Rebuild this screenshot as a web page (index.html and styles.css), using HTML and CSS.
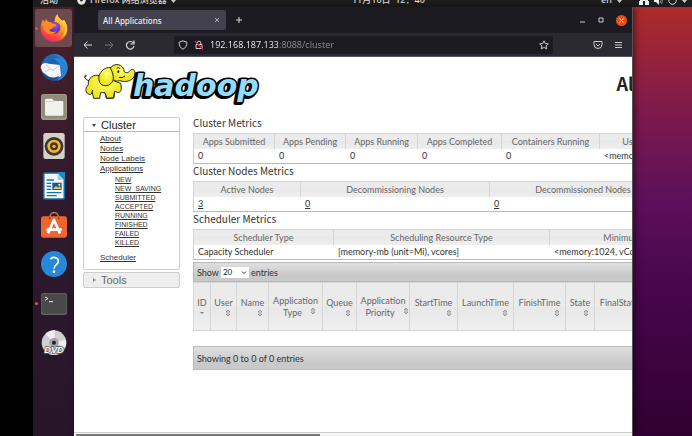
FILE: index.html
```html
<!DOCTYPE html>
<html lang="zh-CN">
  <head>
    <meta charset="utf-8">
    <title>All Applications</title>
    <link rel="stylesheet" href="styles.css">
  </head>
  <body>
    <!-- sort arrows, reused by the table headers -->
    <svg class="defs" width="0" height="0">
      <symbol id="sort" viewBox="0 0 6 8">
        <path d="M1 3L3 1l2 2zM1 5l2 2 2-2z" fill="none" stroke="#888" stroke-width=".8"/>
      </symbol>
      <symbol id="sort-down" viewBox="0 0 6 8">
        <path d="M1 3h4L3 5z" fill="#777"/>
      </symbol>
    </svg>

    <div class="screen">
      <div class="topbar">
        <span class="activities">活动</span>
        <span class="app-menu">
          <svg width="9" height="9" viewBox="0 0 9 9"><circle cx="4.500" cy="4.500" r="4.200" fill="#eee"/><path d="M3 2.500c2-1 4 1 2.500 2.500S2.500 5 3 2.500" fill="#333"/></svg>
          Firefox 网络浏览器
          <svg width="5" height="9" viewBox="0 0 5 9"><path d="M0 4h5L2.500 7z" fill="#ccc"/></svg>
        </span>
        <span class="clock">11月10日&nbsp; 12：40</span>
        <span class="tray">
          <span>en</span>
          <svg width="5" height="9" viewBox="0 0 5 9"><path d="M0 4h5L2.500 7z" fill="#ccc"/></svg>
          <svg class="net" width="10" height="9" viewBox="0 0 10 9"><path d="M3 0h4v3H3zM0 5h4v4H0zM6 5h4v4H6zM1 4h8v1H1z" fill="#eee"/></svg>
          <svg width="9" height="9" viewBox="0 0 9 9"><path d="M0 3h2l3-3v9L2 6H0z" fill="#eee"/><path d="M6 2q2 2.500 0 5M7.500 1q2 3.500 0 7" fill="none" stroke="#aaa" stroke-width=".8"/></svg>
          <svg width="9" height="9" viewBox="0 0 9 9"><path d="M2.500 1.500a3.700 3.700 0 1 0 4 0M4.500 0v4" fill="none" stroke="#ddd"/></svg>
          <svg width="5" height="9" viewBox="0 0 5 9"><path d="M0 4h5L2.500 7z" fill="#ccc"/></svg>
        </span>
      </div>

      <div class="desktop">
        <div class="dock">
          <a class="dock-item active running" href="#" title="Firefox">
            <svg width="28" height="28" viewBox="0 0 84 84">
              <defs>
                <linearGradient id="ff" x1=".8" y1="0" x2=".3" y2="1"><stop offset="0" stop-color="#ffe63d"/><stop offset=".45" stop-color="#ff9a1f"/><stop offset=".75" stop-color="#ff4a3d"/><stop offset="1" stop-color="#f0246e"/></linearGradient>
                <radialGradient id="ffb" cx=".6" cy=".3"><stop offset="0" stop-color="#a34ff5"/><stop offset="1" stop-color="#5a35b8"/></radialGradient>
              </defs>
              <path d="M52 1c2 10 10 15 15 20l4-4c6 9 12 18 11 30-1 22-18 36-40 36S2 66 2 44c0-11 2-21 8-28l3 9 6-10c1 6 4 8 9 9l16-1C44 14 46 6 52 1z" fill="url(#ff)"/>
              <path d="M28 28c8-6 27-6 32 6s-4 26-19 26c-12 0-18-8-18-16z" fill="url(#ffb)"/>
              <path d="M10 24c10-2 20-1 27 4 8 2 12 3 12 6s-7 4-11 7c-2 3-6 7-11 5 2 9 13 10 23 5-6 12-26 13-35 1C10 44 8 34 10 24z" fill="#ff8a1f"/>
              <path d="M52 1c0 15 20 22 19 42 3-8 2-13-1-20 10 18 6 40-12 51C86 62 86 36 72 17l-3 5C61 16 53 10 52 1z" fill="#ffd43a"/>
            </svg>
          </a>
          <a class="dock-item" href="#" title="Thunderbird">
            <svg width="28" height="28" viewBox="0 0 84 84">
              <circle cx="43" cy="43" r="40" fill="#1d62ad"/>
              <path d="M22 12C46-8 84 12 83 46c-1 20-15 34-32 38 16-20 18-42 2-58-10-10-22-13-31-14z" fill="#2a84d6"/>
              <path d="M16 16C32 0 54 4 62 18c-12-6-30-3-40 10L10 34z" fill="#2467b4"/>
              <path d="M2 44c2-13 12-16 24-12l34 4 3 32c-8 7-22 9-34 5L8 57z" fill="#f6f6f8"/>
              <path d="M18 36l20 16 22-15M14 56l16-8" fill="none" stroke="#c3c9d5" stroke-width="3"/>
              <path d="M8 60c10 14 30 18 50 8-10 16-39 20-50-8z" fill="#174b91"/>
            </svg>
          </a>
          <a class="dock-item" href="#" title="Files">
            <svg width="26" height="26" viewBox="0 0 78 78">
              <rect width="78" height="78" rx="8" fill="#a19a88"/>
              <rect x="3" y="3" width="72" height="70" rx="7" fill="#918b7b"/>
              <path d="M12 18q0-4 4-4h17l6 7h24q4 0 4 4v36q0 4-4 4H16q-4 0-4-4z" fill="#f2f1ed"/>
              <path d="M14 23h22l5-3" fill="none" stroke="#d2cec4" stroke-width="3"/>
            </svg>
          </a>
          <a class="dock-item" href="#" title="Rhythmbox">
            <svg width="26" height="26" viewBox="0 0 78 78">
              <rect x="7" width="64" height="78" rx="7" fill="#d5d1c9"/>
              <circle cx="39" cy="40" r="28" fill="#383838"/>
              <circle cx="39" cy="40" r="20" fill="#f6b52c"/>
              <circle cx="39" cy="40" r="12" fill="#3c3933"/>
              <circle cx="39" cy="40" r="5" fill="#f6b52c"/>
            </svg>
          </a>
          <a class="dock-item" href="#" title="LibreOffice Writer">
            <svg width="26" height="28" viewBox="0 0 78 84">
              <path d="M12 3h38l20 20v54q0 4-4 4H12q-4 0-4-4V7q0-4 4-4z" fill="#f4f7fa" stroke="#136a9c" stroke-width="5"/>
              <path d="M50 0h22v24z" fill="#1c8bc7"/><path d="M50 2v22h20z" fill="#9bd0ec"/>
              <path d="M17 24h22M17 34h14M17 43h14M17 52h14M17 62h44M17 71h30" stroke="#1674a8" stroke-width="4"/>
              <path d="M34 32h28v22H34z" fill="#1b5c83"/><path d="M36 51l9-9 6 5 5-4 5 8z" fill="#e5ca64"/><circle cx="55" cy="38" r="3" fill="#fff"/>
            </svg>
          </a>
          <a class="dock-item" href="#" title="Ubuntu Software">
            <svg width="26" height="26" viewBox="0 0 78 78">
              <path d="M26 18c0-22 27-22 27 0" fill="none" stroke="#b98559" stroke-width="4"/>
              <rect y="13" width="78" height="64" rx="7" fill="#ee6530"/>
              <path d="M26 16v6M53 16v6" stroke="#7d351b" stroke-width="4"/>
              <path d="M21 64l18-40 18 40M16 53h46" fill="none" stroke="#fff" stroke-width="8" stroke-linejoin="round"/>
            </svg>
          </a>
          <a class="dock-item" href="#" title="Help">
            <svg width="26" height="26" viewBox="0 0 78 78">
              <circle cx="39" cy="39" r="39" fill="#2688d8"/>
              <path d="M28 25c7-10 25-6 24 6-1 11-13 10-13 22" fill="none" stroke="#fff" stroke-width="5"/>
              <circle cx="39" cy="62" r="4" fill="#fff"/>
            </svg>
          </a>
          <a class="dock-item running" href="#" title="Terminal">
            <svg width="26" height="22" viewBox="0 0 78 66">
              <rect width="78" height="66" rx="8" fill="#666"/>
              <rect x="2" y="2" width="74" height="60" rx="7" fill="#494949"/>
              <path d="M12 12l9 5-9 5M24 26h12" fill="none" stroke="#f0f0f0" stroke-width="3"/>
            </svg>
          </a>
          <a class="dock-item" href="#" title="DVD">
            <svg width="26" height="26" viewBox="0 0 78 78">
              <circle cx="39" cy="38" r="37" fill="#cfcfcf"/>
              <path d="M39 38L14 11q13-11 28-10zM39 38l34 14q4-12 2-23z" fill="#eee"/>
              <circle cx="39" cy="38" r="14" fill="#a7a2a8"/><circle cx="39" cy="38" r="6" fill="#2c1b2d"/>
              <text x="39" y="70" class="dvd-text">DVD</text>
            </svg>
          </a>
        </div>

        <div class="window">
          <div class="tabstrip">
            <div class="tab">
              <span>All Applications</span>
              <button class="icon-btn" aria-label="Close tab"><svg width="6" height="6" viewBox="0 0 6 6"><path d="M1 1l4 4M5 1L1 5" stroke="#ccc" stroke-width=".8"/></svg></button>
            </div>
            <button class="icon-btn new-tab" aria-label="New tab"><svg width="8" height="8" viewBox="0 0 8 8"><path d="M4 1v6M1 4h6" stroke="#ddd"/></svg></button>
            <div class="window-controls">
              <button class="icon-btn" aria-label="Minimize"><svg width="6" height="6" viewBox="0 0 6 6"><path d="M0 5h5" stroke="#ccc"/></svg></button>
              <button class="icon-btn" aria-label="Maximize"><svg width="6" height="6" viewBox="0 0 6 6"><path d="M1 1h4v4H1z" fill="none" stroke="#ccc"/></svg></button>
              <button class="icon-btn close-window" aria-label="Close"><svg width="5" height="5" viewBox="0 0 5 5"><path d="M.5.5l4 4M4.500.5l-4 4" stroke="#fff"/></svg></button>
            </div>
          </div>

          <div class="toolbar">
            <div class="nav-buttons">
              <button class="icon-btn" aria-label="Back"><svg width="10" height="10" viewBox="0 0 10 10"><path d="M9 5H1M4.500 1.500L1 5l3.500 3.500" fill="none" stroke="#ddd"/></svg></button>
              <button class="icon-btn" aria-label="Forward"><svg width="10" height="10" viewBox="0 0 10 10"><path d="M1 5h8M5.500 1.500L9 5 5.500 8.500" fill="none" stroke="#74737c"/></svg></button>
              <button class="icon-btn" aria-label="Reload"><svg width="10" height="10" viewBox="0 0 10 10"><path d="M8.300 3A3.800 3.800 0 1 0 9 6M9 .5v3.500H5.500" fill="none" stroke="#ddd" stroke-width="1.200"/></svg></button>
            </div>
            <div class="urlbar">
              <svg width="10" height="10" viewBox="0 0 10 10"><path d="M5 .8l3.800 1.400C9 6 7.500 8 5 9.200 2.500 8 1 6 1.200 2.200z" fill="none" stroke="#ccc"/></svg>
              <svg class="lock" width="10" height="10" viewBox="0 0 10 10"><path d="M2 4.500h6v4H2zM3.200 4.500V3a1.800 1.800 0 0 1 3.600 0v1.500" fill="none" stroke="#ccc"/><path d="M1 1l8 8.500" stroke="#e22850" stroke-width="1.200"/></svg>
              <input class="address" type="text" value="192.168.187.133:8088/cluster" aria-label="Address">
              <button class="icon-btn" aria-label="Bookmark"><svg width="10" height="10" viewBox="0 0 10 10"><path d="M5 .8l1.300 2.800 3 .3-2.200 2 .6 3L5 7.400 2.300 8.900l.6-3-2.200-2 3-.3z" fill="none" stroke="#ccc"/></svg></button>
            </div>
            <div class="toolbar-end">
              <button class="icon-btn" aria-label="Save to Pocket"><svg width="10" height="10" viewBox="0 0 10 10"><path d="M1 1.500h8v3a4 4 0 0 1-8 0zM3 4l2 2 2-2" fill="none" stroke="#ccc"/></svg></button>
              <button class="icon-btn" aria-label="Menu"><svg width="8" height="8" viewBox="0 0 8 8"><path d="M0 1.500h7M0 4h7M0 6.500h7" stroke="#ccc"/></svg></button>
            </div>
          </div>

          <div class="viewport">
            <div class="page">
              <div class="page-header">
                <svg class="logo" width="178" height="46" viewBox="0 0 534 138">
                  <defs><radialGradient id="hide" cx=".55" cy=".35"><stop offset="0" stop-color="#ffff72"/><stop offset="1" stop-color="#eee420"/></radialGradient></defs>
                  <path d="M18 56C8 54 2 46 8 38M3 46l8-5" fill="none" stroke="#222" stroke-width="3"/>
                  <path d="M52 42C32 34 14 48 16 68 5 80 6 94 22 98l6-6 4 17h18l3-17h13l4 17 22-1 3-20 11 4c9-2 11-12 7-28z" fill="url(#hide)" stroke="#292815" stroke-width="3"/>
                  <path d="M66 94l6 15 20-1 3-20" fill="none" stroke="#292815" stroke-width="3"/>
                  <path d="M80 20C94 0 122 5 124 30c8 5 15 0 19-6 7-5 14 1 13 13-4 18-26 26-46 19-16 6-25-6-30-36z" fill="url(#hide)" stroke="#292815" stroke-width="3"/>
                  <path d="M82 17C66 14 52 28 48 42c-2 14 2 28 18 29 14 1 27-11 25-27-2-12-5-19-9-27z" fill="url(#hide)" stroke="#292815" stroke-width="3"/>
                  <path d="M101 19q5-5 10 1M108 46q9 4 18-4M29 84l-3 12" fill="none" stroke="#292815" stroke-width="3"/>
                  <ellipse cx="106" cy="29" rx="3" ry="4" fill="#222"/>
                  <text x="145" y="105" class="logo-shadow">hadoop</text>
                  <text x="150" y="102" class="logo-text">hadoop</text>
                </svg>
                <h1>All Applications</h1>
              </div>

              <div class="page-body">
                <div class="sidebar">
                  <div class="menu open">
                    <h3><svg width="6" height="6" viewBox="0 0 6 6"><path d="M1 2h4L3 5z" fill="#444"/></svg>Cluster</h3>
                    <div class="menu-content">
                      <ul>
                        <li><a href="#">About</a></li>
                        <li><a href="#">Nodes</a></li>
                        <li><a href="#">Node Labels</a></li>
                        <li><a href="#">Applications</a>
                          <ul class="states">
                            <li><a href="#">NEW</a></li>
                            <li><a href="#">NEW_SAVING</a></li>
                            <li><a href="#">SUBMITTED</a></li>
                            <li><a href="#">ACCEPTED</a></li>
                            <li><a href="#">RUNNING</a></li>
                            <li><a href="#">FINISHED</a></li>
                            <li><a href="#">FAILED</a></li>
                            <li><a href="#">KILLED</a></li>
                          </ul>
                        </li>
                        <li><a href="#">Scheduler</a></li>
                      </ul>
                    </div>
                  </div>
                  <div class="menu">
                    <h3><svg width="6" height="6" viewBox="0 0 6 6"><path d="M2 1l3 2-3 2z" fill="#888"/></svg>Tools</h3>
                  </div>
                </div>

                <div class="content">
                  <h2>Cluster Metrics</h2>
                  <table class="metrics">
                    <colgroup><col class="w82"><col class="w71"><col class="w72"><col class="w84"><col class="w98"><col class="w108"><col></colgroup>
                    <thead><tr><th>Apps Submitted</th><th>Apps Pending</th><th>Apps Running</th><th>Apps Completed</th><th>Containers Running</th><th>Used Resources</th><th></th></tr></thead>
                    <tbody><tr><td>0</td><td>0</td><td>0</td><td>0</td><td>0</td><td>&lt;memory:0 B, vCores:0&gt;</td><td></td></tr></tbody>
                  </table>

                  <h2>Cluster Nodes Metrics</h2>
                  <table class="metrics">
                    <colgroup><col class="w108"><col class="w189"><col class="w187"><col></colgroup>
                    <thead><tr><th>Active Nodes</th><th>Decommissioning Nodes</th><th>Decommissioned Nodes</th><th></th></tr></thead>
                    <tbody><tr><td><a href="#">3</a></td><td><a href="#">0</a></td><td><a href="#">0</a></td><td></td></tr></tbody>
                  </table>

                  <h2>Scheduler Metrics</h2>
                  <table class="metrics">
                    <colgroup><col class="w141"><col class="w216"><col class="w187"><col></colgroup>
                    <thead><tr><th>Scheduler Type</th><th>Scheduling Resource Type</th><th>Minimum Allocation</th><th></th></tr></thead>
                    <tbody><tr><td>Capacity Scheduler</td><td>[memory-mb (unit=Mi), vcores]</td><td>&lt;memory:1024, vCores:1&gt;</td><td></td></tr></tbody>
                  </table>

                  <div class="apps">
                    <div class="apps-bar">
                      <label for="length">Show</label>
                      <span class="select">
                        <select id="length"><option>20</option><option>40</option><option>60</option></select>
                        <svg width="6" height="4" viewBox="0 0 6 4"><path d="M1 .5l2 2 2-2" fill="none" stroke="#333"/></svg>
                      </span>
                      <span>entries</span>
                    </div>
                    <table class="apps-table">
                      <colgroup><col class="w18"><col class="w26"><col class="w32"><col class="w54"><col class="w34"><col class="w53"><col class="w48"><col class="w56"><col class="w52"><col class="w29"><col class="w54"><col></colgroup>
                      <thead>
                        <tr>
                          <th>ID<span class="sort"><svg><use href="#sort-down"/></svg></span></th>
                          <th>User<span class="sort"><svg><use href="#sort"/></svg></span></th>
                          <th>Name<span class="sort"><svg><use href="#sort"/></svg></span></th>
                          <th>Application<span class="sort second">Type<svg><use href="#sort"/></svg></span></th>
                          <th>Queue<span class="sort"><svg><use href="#sort"/></svg></span></th>
                          <th>Application<span class="sort second">Priority<svg><use href="#sort"/></svg></span></th>
                          <th>StartTime<span class="sort"><svg><use href="#sort"/></svg></span></th>
                          <th>LaunchTime<span class="sort"><svg><use href="#sort"/></svg></span></th>
                          <th>FinishTime<span class="sort"><svg><use href="#sort"/></svg></span></th>
                          <th>State<span class="sort"><svg><use href="#sort"/></svg></span></th>
                          <th>FinalStatus<span class="sort"><svg><use href="#sort"/></svg></span></th>
                          <th></th>
                        </tr>
                      </thead>
                    </table>
                    <div class="apps-bar apps-info">Showing 0 to 0 of 0 entries</div>
                  </div>
                </div>
              </div>
            </div>
            <div class="scrollbar"><div class="thumb"></div></div>
          </div>
        </div>
      </div>
    </div>
  </body>
</html>
```

FILE: styles.css
```css
* {
  box-sizing: border-box;
}

body {
  margin: 0;
  padding-left: 33px;
  background: #000;
  font-family: "Noto Sans", "Noto Sans CJK SC", sans-serif;
  overflow: hidden;
}

.defs {
  position: absolute;
}

svg {
  flex: none;
}

.screen {
  display: flex;
  flex-direction: column;
  height: 100vh;
}

/* gnome top bar */
.topbar {
  display: flex;
  align-items: flex-end;
  flex: none;
  height: 7px;
  padding: 0 0 1px 7px;
  overflow: hidden;
  background: #1d1d1d;
  color: #ddd;
  font-size: 9px;
  font-weight: 500;
  line-height: 12px;
  white-space: nowrap;
}

.activities {
  width: 37px;
}

.app-menu,
.tray {
  display: flex;
  align-items: center;
  gap: 4px;
}

.clock {
  flex: 1;
  text-align: center;
}

.tray {
  width: 91px;
  gap: 5px;
}

.net {
  margin-left: 12px;
}

.desktop {
  display: flex;
  flex: 1;
  min-height: 0;
  padding-right: 59px;
  background: linear-gradient(#ad2b2a 0, #7f1a4c 24%, #5c1059 45%, #48064d 65%, #310032);
}

/* dock */
.dock {
  display: flex;
  flex-direction: column;
  justify-content: space-between;
  flex: none;
  width: 41px;
  padding: 2px 2px 74px;
  background: linear-gradient(#4b2029, #2f1a2d 45%, #28152a);
}

.dock-item {
  position: relative;
  display: flex;
  align-items: center;
  justify-content: center;
  height: 38px;
  border-radius: 3px;
}

.dock-item.active {
  background: #6c4a50;
}

.dock-item.running::before {
  content: "";
  position: absolute;
  left: 0;
  width: 3px;
  height: 3px;
  border-radius: 50%;
  background: #e95420;
}

.dvd-text {
  font: italic bold 28px "Liberation Sans", sans-serif;
  text-anchor: middle;
  fill: #fff;
  stroke: #555;
  stroke-width: 4px;
  paint-order: stroke;
}

/* browser window */
.window {
  display: flex;
  flex-direction: column;
  flex: 1;
  min-width: 0;
  border-right: 1px solid #555;
  background: #fff;
  box-shadow: 2px 0 6px rgba(0, 0, 0, 0.5);
}

.icon-btn {
  display: flex;
  align-items: center;
  justify-content: center;
  padding: 0;
  border: 0;
  background: none;
}

.tabstrip {
  display: flex;
  align-items: center;
  flex: none;
  height: 26px;
  padding: 0 5px 0 24px;
  background: #1c1b22;
}

.tab {
  display: flex;
  align-items: center;
  justify-content: space-between;
  width: 128px;
  height: 20px;
  padding: 0 6px 0 5px;
  border-radius: 2px;
  background: #42414d;
  color: #eee;
  font-size: 8px;
  font-weight: 500;
}

.new-tab {
  margin-left: 9px;
}

.window-controls {
  display: flex;
  align-items: center;
  gap: 12px;
  margin-left: auto;
}

.close-window {
  width: 11px;
  height: 11px;
  border-radius: 50%;
  background: #e2501d;
}

.toolbar {
  display: flex;
  align-items: center;
  flex: none;
  height: 24px;
  border-bottom: 1px solid #55545c;
  background: #2b2a33;
}

.nav-buttons {
  display: flex;
  gap: 11px;
  width: 100px;
  padding-left: 9px;
}

.urlbar {
  display: flex;
  align-items: center;
  gap: 6px;
  flex: 1;
  height: 18px;
  padding: 0 4px;
  border-radius: 2px;
  background: #1c1b22;
}

.address {
  flex: 1;
  min-width: 0;
  padding: 0;
  border: 0;
  outline: 0;
  /* host is bright, port and path are dimmed */
  background: linear-gradient(90deg, #eee 68px, #8b8a92 68px);
  background-clip: text;
  -webkit-background-clip: text;
  color: transparent;
  font-family: inherit;
  font-size: 9px;
  line-height: 14px;
}

.toolbar-end {
  display: flex;
  align-items: center;
  gap: 12px;
  width: 79px;
  padding-left: 40px;
}

.viewport {
  display: flex;
  flex-direction: column;
  flex: 1;
  min-height: 0;
  overflow: hidden;
}

.scrollbar {
  flex: none;
  height: 4px;
  padding: 1px 2px 0;
  border-top: 1px solid #ccc;
  background: #f5f5f5;
}

.thumb {
  width: 44%;
  height: 2px;
  background: #777;
}

/* yarn page */
.page {
  flex: 1;
  min-width: 1035px;
  min-height: 0;
  overflow: hidden;
  color: #333;
  font-family: Lato, sans-serif;
}

.page-header {
  display: flex;
  align-items: center;
  height: 59px;
  padding: 0 0 8px 9px;
}

h1,
h2 {
  margin: 0;
  font-family: "Noto Sans CJK SC", sans-serif;
}

h1 {
  flex: 1;
  color: #222;
  font-size: 18px;
  text-align: center;
}

.logo {
  margin-top: 4px;
}

.logo-shadow,
.logo-text {
  font: italic bold 90px "DejaVu Sans", sans-serif;
  fill: #000;
  stroke: #000;
  stroke-width: 12px;
  stroke-linejoin: round;
}

.logo-text {
  fill: #94dcff;
  stroke-width: 9px;
  paint-order: stroke;
}

.page-body {
  display: flex;
  gap: 13px;
  padding: 0 9px;
}

.sidebar {
  width: 97px;
  flex: none;
  padding-top: 1px;
  font-family: "Liberation Sans", sans-serif;
}

.menu {
  margin-bottom: 2px;
  border: 1px solid #ccc;
  border-radius: 2px;
  background: #eee;
}

.menu.open {
  background: #fff;
}

.menu h3 {
  display: flex;
  align-items: center;
  gap: 4px;
  height: 14px;
  margin: 0;
  padding-left: 7px;
  color: #666;
  font-size: 11px;
  font-weight: normal;
}

.menu.open h3 {
  border-bottom: 1px solid #bbb;
  color: #222;
}

.menu-content {
  height: 137px;
  padding: 2px 0 0 16px;
  font-size: 8px;
  line-height: 10px;
}

.menu ul {
  margin: 0;
  padding: 0;
  list-style: none;
}

.menu .states {
  padding: 1px 0 6px 15px;
  font-size: 7px;
  line-height: 9px;
}

a {
  color: #333;
}

.content {
  flex: 1;
  min-width: 0;
}

h2 {
  height: 17px;
  font-size: 10px;
  font-weight: normal;
  line-height: 14px;
}

table {
  width: 100%;
  border-collapse: separate;
  border-spacing: 0;
  table-layout: fixed;
  white-space: nowrap;
}

th {
  padding: 0;
  border: 1px solid #d6d6d6;
  border-left-width: 0;
  background: linear-gradient(#ebebeb 50%, #e8e8e8 50%, #efefef);
  color: #666;
  font-size: 9px;
  font-weight: normal;
}

th:first-child {
  border-left-width: 1px;
}

.metrics th {
  height: 16px;
  border-bottom: 0;
  line-height: 15px;
}

td {
  height: 15px;
  padding: 0 4px;
  border-bottom: 1px solid #bbb;
  font-size: 9px;
  line-height: 14px;
}

td:first-child {
  border-left: 1px solid #ccc;
}

.w18 { width: 18px; }
.w26 { width: 26px; }
.w29 { width: 29px; }
.w32 { width: 32px; }
.w34 { width: 34px; }
.w48 { width: 48px; }
.w52 { width: 52px; }
.w53 { width: 53px; }
.w54 { width: 54px; }
.w56 { width: 56px; }
.w71 { width: 71px; }
.w72 { width: 72px; }
.w82 { width: 82px; }
.w84 { width: 84px; }
.w98 { width: 98px; }
.w108 { width: 108px; }
.w141 { width: 141px; }
.w187 { width: 187px; }
.w189 { width: 189px; }
.w216 { width: 216px; }

.apps {
  padding-top: 2px;
}

.apps-bar {
  display: flex;
  align-items: center;
  gap: 2px;
  height: 20px;
  padding: 0 3px;
  border: 1px solid #bbb;
  background: linear-gradient(#e0e0e0, #c9c9c9 70%);
  font-size: 9px;
}

.select {
  position: relative;
  display: flex;
  width: 28px;
}

.select select {
  width: 100%;
  height: 11px;
  padding: 0 2px;
  border: 0;
  appearance: none;
  background: #fff;
  color: #222;
  font-family: inherit;
  font-size: 8px;
  line-height: 11px;
}

.select svg {
  position: absolute;
  top: 4px;
  right: 2px;
}

.apps-table th {
  height: 49px;
  line-height: 12px;
}

.sort {
  display: flex;
  justify-content: flex-end;
  height: 8px;
  padding-right: 5px;
}

.sort svg {
  width: 6px;
  height: 8px;
}

.sort.second {
  justify-content: center;
  gap: 8px;
  height: 12px;
  padding: 0 0 0 8px;
}

.apps-info {
  height: 24px;
  margin-top: 15px;
}
```
